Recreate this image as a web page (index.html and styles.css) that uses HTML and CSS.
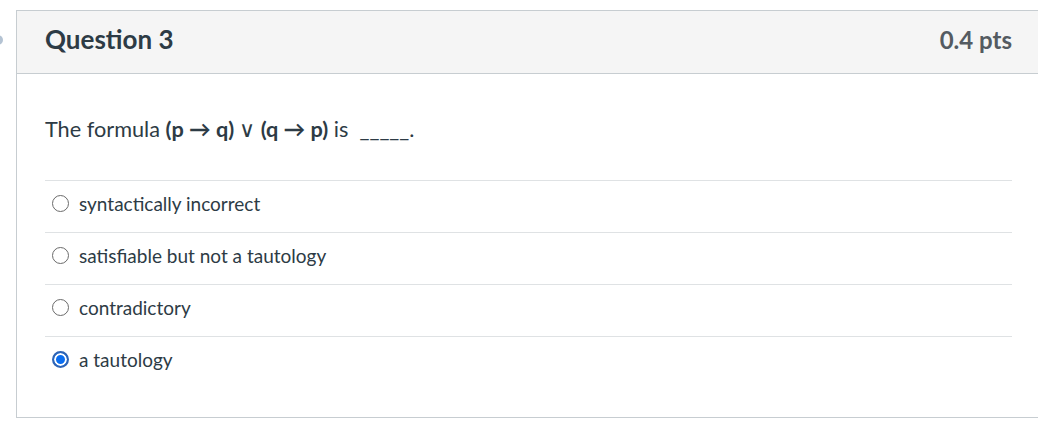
FILE: index.html
```html
<!DOCTYPE html>
<html lang="en">
<head>
    <meta charset="UTF-8">
    <title>Question 3</title>
    <link rel="stylesheet" href="styles.css">
</head>
<body>
    <span class="flag"></span>
    <div class="question">
        <div class="header">
            <h2 class="title">Question 3</h2>
            <span class="points">0.4 pts</span>
        </div>
        <div class="content">
            <p class="prompt">The formula <b>(p &rarr; q) <span class="op">&or;</span> (q &rarr; p)</b> is &nbsp;_____.</p>
            <div class="answers">
                <label class="answer"><span class="radio"></span>syntactically incorrect</label>
                <label class="answer"><span class="radio"></span>satisfiable but not a tautology</label>
                <label class="answer"><span class="radio"></span>contradictory</label>
                <label class="answer"><span class="radio checked"></span>a tautology</label>
            </div>
        </div>
    </div>
</body>
</html>
```

FILE: styles.css
```css
body {
    margin: 0;
    font-family: Lato, "Open Sans", sans-serif;
    color: #2d3b45;
    background: #fff;
    overflow: hidden;
}

/* little marker peeking in from the left edge */
.flag {
    position: absolute;
    left: -7px;
    top: 35px;
    width: 10px;
    height: 10px;
    border-radius: 50%;
    background: #b4c3d3;
}

.question {
    margin: 10px 0 0 16px;
    width: 1030px;
    border: 1px solid #c7cdd1;
    border-right: none;
}

.header {
    box-sizing: border-box;
    display: flex;
    justify-content: space-between;
    align-items: center;
    height: 63px;
    padding: 0 35px 6px 28px;
    background: #f5f5f5;
    border-bottom: 1px solid #c7cdd1;
}
.title {
    margin: 0;
    font-size: 26px;
    font-weight: bold;
    color: #2d3b45;
}
.points {
    font-size: 24px;
    font-weight: bold;
    color: #545b61;
}

.content {
    padding: 40px 35px 29px 28px;
}
.prompt {
    margin: 0 0 36px;
    font-size: 21.7px;
    line-height: 30px;
}
.prompt .op {
    font-weight: normal;
}

.answer {
    box-sizing: border-box;
    display: flex;
    align-items: center;
    height: 52px;
    padding: 0 0 6px 7px;
    border-top: 1px solid #dfe2e4;
    font-size: 19px;
}

.radio {
    box-sizing: border-box;
    width: 17px;
    height: 17px;
    margin-right: 10px;
    border: 1.5px solid #6b6b6b;
    border-radius: 50%;
    background: #fff;
}
.radio.checked {
    border: 2px solid #2e64b5;
    background: #0b6ef0;
    box-shadow: inset 0 0 0 2px #fff;
}
```
